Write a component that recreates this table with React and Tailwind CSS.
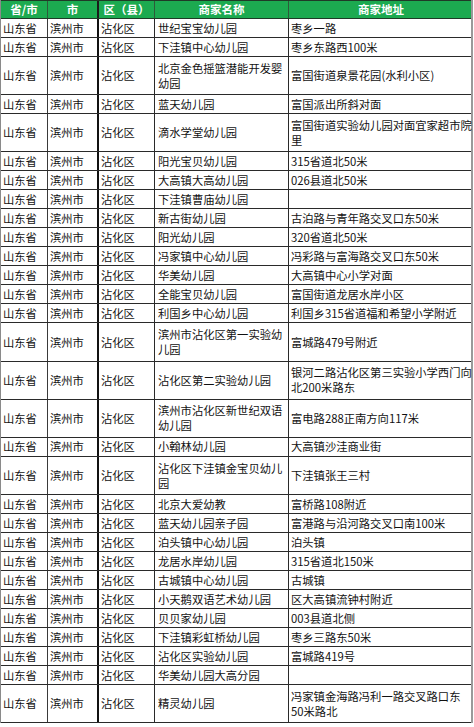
import React from "react";

const HEAD = ["省/市", "市", "区（县）", "商家名称", "商家地址"];

// [name, address] — arrays are the two lines of a wrapped cell
const ROWS = [
  ["世纪宝宝幼儿园", "枣乡一路"],
  ["下洼镇中心幼儿园", "枣乡东路西100米"],
  [["北京金色摇篮潜能开发婴", "幼园"], "富国街道泉景花园(水利小区)"],
  ["蓝天幼儿园", "富国派出所斜对面"],
  ["滴水学堂幼儿园", ["富国街道实验幼儿园对面宜家超市院", "里"]],
  ["阳光宝贝幼儿园", "315省道北50米"],
  ["大高镇大高幼儿园", "026县道北50米"],
  ["下洼镇曹庙幼儿园", ""],
  ["新古街幼儿园", "古泊路与青年路交叉口东50米"],
  ["阳光幼儿园", "320省道北50米"],
  ["冯家镇中心幼儿园", "冯彩路与富海路交叉口东50米"],
  ["华美幼儿园", "大高镇中心小学对面"],
  ["全能宝贝幼儿园", "富国街道龙居水岸小区"],
  ["利国乡中心幼儿园", "利国乡315省道福和希望小学附近"],
  [["滨州市沾化区第一实验幼", "儿园"], "富城路479号附近"],
  ["沾化区第二实验幼儿园", ["银河二路沾化区第三实验小学西门向", "北200米路东"]],
  [["滨州市沾化区新世纪双语", "幼儿园"], "富电路288正南方向117米"],
  ["小翰林幼儿园", "大高镇沙洼商业街"],
  [["沾化区下洼镇金宝贝幼儿", "园"], "下洼镇张王三村"],
  ["北京大爱幼教", "富桥路108附近"],
  ["蓝天幼儿园亲子园", "富港路与沿河路交叉口南100米"],
  ["泊头镇中心幼儿园", "泊头镇"],
  ["龙居水岸幼儿园", "315省道北150米"],
  ["古城镇中心幼儿园", "古城镇"],
  ["小天鹅双语艺术幼儿园", "区大高镇流钟村附近"],
  ["贝贝家幼儿园", "003县道北侧"],
  ["下洼镇彩虹桥幼儿园", "枣乡三路东50米"],
  ["沾化区实验幼儿园", "富城路419号"],
  ["华美幼儿园大高分园", ""],
  ["精灵幼儿园", ["冯家镇金海路冯利一路交叉路口东", "50米路北"]],
];

function Text({ value }) {
  if (Array.isArray(value)) {
    return (
      <span className="leading-[15px]">
        {value[0]}
        <br />
        {value[1]}
      </span>
    );
  }
  return <span>{value}</span>;
}

const COLS = "grid grid-cols-[47px_51px_56px_134px_184px]";

export default function App() {
  return (
    <div
      className="w-[474px] h-[727px] bg-white overflow-hidden"
      style={{ fontFamily: '"Noto Sans CJK SC", "Noto Sans", sans-serif' }}
    >
      <div className="w-[473px] border-l border-r-2 border-l-[#8a8a8a] border-r-[#9a9a9a]">
        <div className={`${COLS} h-[19px] bg-[#1caa50] border-t border-b border-[#1f3a27] text-white font-bold text-[11.5px]`}>
          {HEAD.map((h, i) => (
            <div
              key={h}
              className={`flex items-center justify-center border-r ${i === 1 ? "border-r-2 border-r-[#1b1b1b]" : "border-r-[#2d5a3a]"} ${i === 4 ? "border-r-0" : ""}`}
            >
              {h}
            </div>
          ))}
        </div>
        {ROWS.map(([name, addr], idx) => {
          const tall = Array.isArray(name) || Array.isArray(addr);
          return (
            <div
              key={idx}
              className={`${COLS} ${tall ? "h-[38.2px]" : "h-[19px]"} border-b border-b-[#2a2a2a] text-[11.3px] text-[#111]`}
            >
              <div className="flex items-center pl-[2px] border-r border-r-[#3a3a3a]">山东省</div>
              <div className="flex items-center pl-[2px] border-r-2 border-r-[#111]">滨州市</div>
              <div className="flex items-center pl-[2px] border-r border-r-[#2a2a2a]">沾化区</div>
              <div className="flex items-center pl-[3px] border-r border-r-[#2a2a2a] whitespace-nowrap">
                <Text value={name} />
              </div>
              <div className="flex items-center pl-[2px] whitespace-nowrap">
                <Text value={addr} />
              </div>
            </div>
          );
        })}
      </div>
    </div>
  );
}
